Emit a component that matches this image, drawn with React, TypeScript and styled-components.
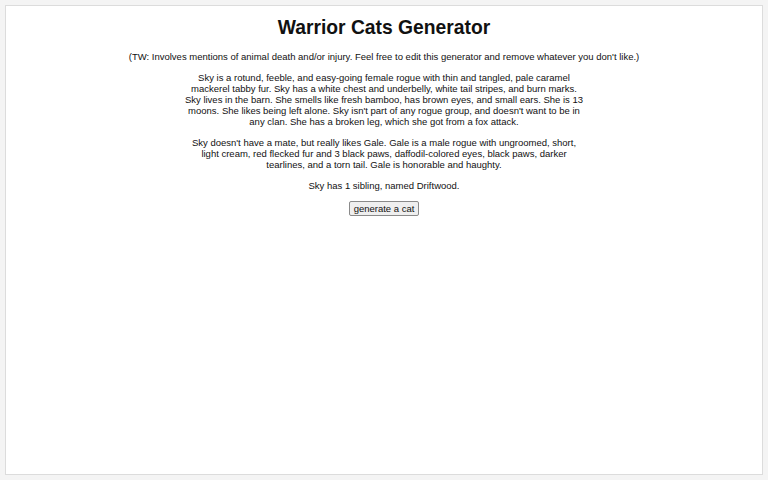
import { useState } from "react";
import styled, { createGlobalStyle } from "styled-components";

const GlobalStyle = createGlobalStyle`
  html, body {
    margin: 0;
    padding: 0;
    background: #f4f4f4;
    font-family: "Liberation Sans", Arial, sans-serif;
    color: #111;
  }
`;

const Page = styled.div`
  padding: 5px;
  height: 480px;
  box-sizing: border-box;
`;

const Card = styled.div`
  background: #fff;
  border: 1px solid #dcdcdc;
  height: 470px;
  box-sizing: border-box;
  padding-top: 10px;
  text-align: center;
  font-size: 9.5px;
  line-height: 11px;
`;

const Title = styled.h1`
  margin: 0 0 11px;
  font-size: 19.3px;
  line-height: 24px;
  font-weight: bold;
`;

const Warning = styled.p`
  margin: 0 0 10px;
`;

const Story = styled.div`
  width: 403px;
  margin: 0 auto;
`;

const Para = styled.p`
  margin: 0 0 10px;
`;

const GenerateButton = styled.button`
  font-family: "Liberation Sans", Arial, sans-serif;
  font-size: 9.5px;
  line-height: 11px;
  padding: 1px 4px;
  color: #111;
  background: #efefef;
  border: 1px solid #8a8a8a;
  border-radius: 2px;
  cursor: pointer;
  vertical-align: top;
`;

const cats = [
  {
    desc: "Sky is a rotund, feeble, and easy-going female rogue with thin and tangled, pale caramel mackerel tabby fur. Sky has a white chest and underbelly, white tail stripes, and burn marks. Sky lives in the barn. She smells like fresh bamboo, has brown eyes, and small ears. She is 13 moons. She likes being left alone. Sky isn't part of any rogue group, and doesn't want to be in any clan. She has a broken leg, which she got from a fox attack.",
    mate: "Sky doesn't have a mate, but really likes Gale. Gale is a male rogue with ungroomed, short, light cream, red flecked fur and 3 black paws, daffodil-colored eyes, black paws, darker tearlines, and a torn tail. Gale is honorable and haughty.",
    family: "Sky has 1 sibling, named Driftwood.",
  },
];

export default function App() {
  const [idx, setIdx] = useState(0);
  const cat = cats[idx];

  return (
    <Page>
      <GlobalStyle />
      <Card>
        <Title>Warrior Cats Generator</Title>
        <Warning>
          (TW: Involves mentions of animal death and/or injury. Feel free to edit this generator and remove whatever you don't like.)
        </Warning>
        <Story>
          <Para>{cat.desc}</Para>
          <Para>{cat.mate}</Para>
          <Para>{cat.family}</Para>
        </Story>
        <GenerateButton onClick={() => setIdx((idx + 1) % cats.length)}>
          generate a cat
        </GenerateButton>
      </Card>
    </Page>
  );
}
